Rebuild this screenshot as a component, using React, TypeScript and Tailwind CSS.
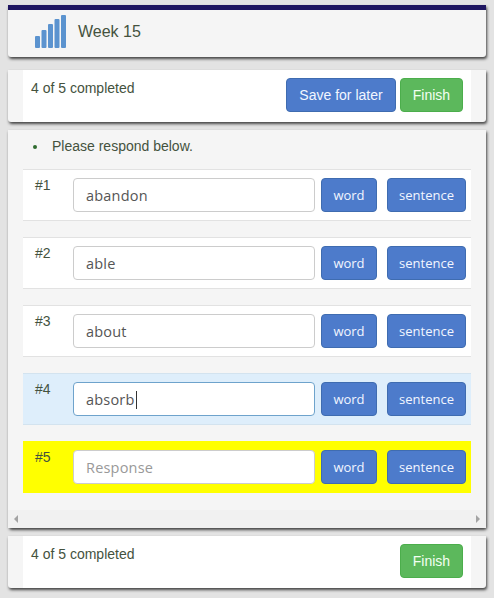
const rows = [
  { n: 1, value: "abandon", tone: "plain" },
  { n: 2, value: "able", tone: "plain" },
  { n: 3, value: "about", tone: "plain" },
  { n: 4, value: "absorb", tone: "active" },
  { n: 5, value: "", tone: "empty" },
];

function RowButton({ label, width }: { label: string; width: string }) {
  return (
    <button className={`${width} h-[34px] shrink-0 rounded-[4px] border border-[#3f6cb0] bg-[#4d7bcb] pt-0.5 text-[13px] text-[#f2f6ff] [font-family:'Open_Sans',sans-serif]`}>
      {label}
    </button>
  );
}

function Row({ n, value, tone }: { n: number; value: string; tone: string }) {
  const bg =
    tone === "active"
      ? "bg-[#deeefb] border-[#d3e3ef]"
      : tone === "empty"
      ? "bg-[#ffff00] border-[#ffff00]"
      : "bg-white border-[#e2e2e2]";
  return (
    <div className={`h-[52px] flex items-start border-y pt-2 pl-3 pr-[5px] ${bg}`}>
      <div className="w-[38px] shrink-0 -mt-px text-[14px] leading-[17px] text-[#44523e]">#{n}</div>
      <div className={`w-[242px] h-[34px] shrink-0 flex items-center rounded-[4px] border bg-white pl-3 pt-0.5 text-[14.5px] tracking-[0.2px] [font-family:'Open_Sans',sans-serif] ${tone === "active" ? "border-[#6ea3cc]" : "border-[#cccccc]"} ${value ? "text-[#555555]" : "text-[#999999]"}`}>
        {value || "Response"}
        {tone === "active" && <span className="ml-px h-[18px] w-px bg-[#333333]" />}
      </div>
      <div className="ml-1.5 flex gap-2.5">
        <RowButton label="word" width="w-[56px]" />
        <RowButton label="sentence" width="w-[79px]" />
      </div>
    </div>
  );
}

function StatusBar({ showSave, className }: { showSave: boolean; className: string }) {
  return (
    <div className={`mx-2 h-[52px] rounded-b-[3px] bg-[#f5f5f5] px-[15px] shadow-[1px_2px_3px_#444444] ${className}`}>
      <div className="h-full bg-white pl-2 pr-2 flex justify-between">
        <div className="pt-2.5 text-[14px] leading-[17px] text-[#44523e]">4 of 5 completed</div>
        <div className="pt-2 flex gap-1">
          {showSave && (
            <button className="h-[34px] w-[110px] rounded-[4px] border border-[#3f6cb0] bg-[#4d7bcb] text-[14px] text-[#f2f6ff]">Save for later</button>
          )}
          <button className="h-[34px] w-[63px] rounded-[4px] border border-[#4cae4c] bg-[#5cb85c] text-[14px] text-[#f2fff2]">Finish</button>
        </div>
      </div>
    </div>
  );
}

export default function App() {
  return (
    <div className="h-[598px] w-[494px] overflow-hidden bg-[#e3e3e3] pt-[5px] [font-family:'Liberation_Sans',Arial,sans-serif]">
      <div className="mx-2 h-[52px] rounded-b-[3px] border-t-[5px] border-[#1e1560] bg-[#f5f5f5] shadow-[1px_2px_3px_#444444] flex items-center pl-[27px]">
        <svg width="31" height="33" viewBox="0 0 31 33" className="mb-1">
          <rect x="0" y="21" width="5" height="12" rx="1" fill="#5b93cf" />
          <rect x="6.5" y="15" width="5" height="18" rx="1" fill="#5b93cf" />
          <rect x="13" y="9" width="5" height="24" rx="1" fill="#5b93cf" />
          <rect x="19.5" y="4" width="5" height="29" rx="1" fill="#5b93cf" />
          <rect x="26" y="0" width="5" height="33" rx="1" fill="#5b93cf" />
        </svg>
        <div className="ml-3 mb-1 text-[16px] text-[#44523e]">Week 15</div>
      </div>

      <StatusBar showSave className="mt-[13px]" />

      <div className="mx-2 mt-2 h-[398px] rounded-b-[3px] bg-[#f5f5f5] shadow-[1px_2px_3px_#444444] flex flex-col">
        <div className="h-[39px] shrink-0 flex items-start pl-[25px] pt-2 text-[14px] leading-[17px] text-[#44523e]">
          <span className="mt-[7px] h-1 w-1 shrink-0 rounded-full bg-[#2f6b2f]" />
          <span className="ml-[15px]">Please respond below.</span>
        </div>
        <div className="mx-[15px] flex flex-col gap-4">
          {rows.map((r) => (
            <Row key={r.n} n={r.n} value={r.value} tone={r.tone} />
          ))}
        </div>
        <div className="mt-auto h-[18px] bg-[#f1f1f1] flex items-center justify-between px-1.5">
          <div className="h-0 w-0 border-y-[4px] border-r-[4px] border-y-transparent border-r-[#a3a3a3]" />
          <div className="h-0 w-0 border-y-[4px] border-l-[4px] border-y-transparent border-l-[#a3a3a3]" />
        </div>
      </div>

      <StatusBar showSave={false} className="mt-2" />
    </div>
  );
}
